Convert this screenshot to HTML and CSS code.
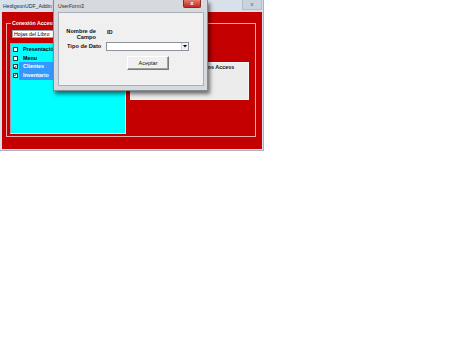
FILE: index.html
```html
<!DOCTYPE html>
<html>
<head>
<meta charset="utf-8">
<link rel="stylesheet" href="styles.css">
</head>
<body>
<div class="desktop">
  <div class="win win-main">
    <div class="titlebar">
      <span class="title">HedigsonUDF_Addin</span>
      <span class="main-close">x</span>
    </div>
    <div class="main-body">
      <div class="frame">
        <span class="frame-caption">Conexión Access</span>
        <div class="left-col">
          <div class="textbox">Hojas del Libro</div>
          <div class="listbox">
            <div class="row"><span class="chk"></span><span class="item">Presentación</span></div>
            <div class="row"><span class="chk"></span><span class="item">Menu</span></div>
            <div class="row"><span class="chk"><svg viewBox="0 0 5 5" width="4" height="4"><polyline points="0.8,2.4 2,3.8 4.2,1" fill="none" stroke="#000" stroke-width="1"/></svg></span><span class="item sel">Clientes</span></div>
            <div class="row"><span class="chk"><svg viewBox="0 0 5 5" width="4" height="4"><polyline points="0.8,2.4 2,3.8 4.2,1" fill="none" stroke="#000" stroke-width="1"/></svg></span><span class="item sel">Inventario</span></div>
          </div>
        </div>
        <div class="access-box">
          <span class="access-label">Datos Access</span>
        </div>
      </div>
    </div>
  </div>

  <div class="win win-form">
    <div class="form-titlebar">
      <span class="title">UserForm3</span>
      <span class="form-close">x</span>
    </div>
    <div class="client">
      <div class="frow frow1">
        <span class="lbl lbl-name">Nombre de<br>Campo</span>
        <span class="lbl lbl-id">ID</span>
      </div>
      <div class="frow frow2">
        <span class="lbl lbl-tipo">Tipo de Dato</span>
        <div class="combo"><span class="combo-btn"><svg viewBox="0 0 5 3" width="4" height="2.4"><polygon points="0,0 5,0 2.5,3" fill="#000"/></svg></span></div>
      </div>
      <div class="frow frow3">
        <button class="btn">Aceptar</button>
      </div>
    </div>
  </div>
</div>
</body>
</html>
```

FILE: styles.css
```css
* { box-sizing: border-box; }
html, body { margin: 0; padding: 0; background: #ffffff; }
body { font-family: "Liberation Sans", Arial, sans-serif; }

.desktop {
  position: relative;
  width: 474px;
  height: 355px;
  overflow: hidden;
  background: #ffffff;
}

.win { position: absolute; }

/* Main window */
.win-main {
  left: 0;
  top: 0;
  width: 264px;
  height: 151px;
  background: #d8e0ea;
  border-right: 1px solid #a9b3bf;
  border-bottom: 1px solid #a9b3bf;
  display: flex;
  flex-direction: column;
  padding: 0 1px 1px 2px;
}
.titlebar {
  height: 12px;
  display: flex;
  align-items: center;
  justify-content: space-between;
  padding-left: 1px;
}
.title {
  font-size: 5.2px;
  color: #1e2a36;
  white-space: nowrap;
}
.main-close {
  width: 20px;
  height: 10px;
  margin-top: -2px;
  background: #cbd4de;
  border: 1px solid #b4bec9;
  border-top: none;
  color: #4a5560;
  font-size: 6px;
  line-height: 8px;
  text-align: center;
}
.main-body {
  flex: 1;
  background: #c40000;
  padding: 11px 6px 12px 4px;
  display: flex;
}
.frame {
  position: relative;
  flex: 1;
  border: 1px solid #f3a9a9;
  display: flex;
  align-items: flex-start;
  padding: 6px 5px 2px 3px;
}
.frame-caption {
  position: absolute;
  left: 4px;
  top: -4px;
  background: #c40000;
  color: #ffffff;
  font-weight: bold;
  font-size: 5.2px;
  line-height: 7px;
  padding: 0 1px;
  white-space: nowrap;
}
.left-col {
  display: flex;
  flex-direction: column;
  width: 116px;
}
.textbox {
  margin-left: 2px;
  width: 112px;
  height: 8px;
  background: #ffffff;
  border: 1px solid #9aa3ad;
  font-size: 5.3px;
  line-height: 6px;
  padding-left: 1px;
  color: #000;
  white-space: nowrap;
}
.listbox {
  margin-top: 5px;
  height: 91px;
  background: #00ffff;
  border: 1px solid #f0e6e6;
  border-top-color: #9aa3ad;
  border-left-color: #9aa3ad;
  padding-top: 1px;
}
.row {
  height: 8.7px;
  display: flex;
  align-items: center;
}
.chk {
  width: 5px;
  height: 5px;
  margin-left: 1.5px;
  background: #ffffff;
  border: 0.6px solid #333;
  display: flex;
  align-items: center;
  justify-content: center;
  flex: none;
  overflow: visible;
}
.chk svg { display: block; flex: none; }
.item {
  margin-left: 1.5px;
  flex: 1;
  height: 100%;
  padding-left: 4px;
  font-size: 5.4px;
  font-weight: bold;
  color: #000000;
  line-height: 8.7px;
  white-space: nowrap;
}
.item.sel {
  background: #3399ff;
  color: #ffffff;
}
.access-box {
  position: relative;
  margin-top: 32px;
  margin-left: 4px;
  width: 119px;
  height: 38px;
  background: #ececec;
  border: 1px solid #f8f8f8;
}
.access-label {
  position: absolute;
  left: 68px;
  top: 1px;
  font-size: 5.4px;
  font-weight: bold;
  color: #111;
  white-space: nowrap;
}

/* UserForm */
.win-form {
  left: 53px;
  top: 0;
  width: 155px;
  height: 91px;
  background: #d6d9dd;
  border: 1px solid #858b93;
  border-top: none;
  box-shadow: 2px 3px 4px rgba(0,0,0,0.55);
  display: flex;
  flex-direction: column;
  padding: 0 3px 4px 4px;
}
.form-titlebar {
  height: 12px;
  position: relative;
  display: flex;
  align-items: center;
}
.form-close {
  position: absolute;
  right: 3px;
  top: 0;
  width: 18px;
  height: 8px;
  background: linear-gradient(#e07a6e, #c42a18);
  border: 1px solid #8a2a20;
  border-top: none;
  border-radius: 0 0 2px 2px;
  color: #fff;
  font-size: 6px;
  font-weight: bold;
  line-height: 6px;
  text-align: center;
}
.client {
  flex: 1;
  background: #f0f0f0;
  border: 1px solid #aab0b7;
  display: flex;
  flex-direction: column;
}
.frow { display: flex; }
.frow1 {
  margin-top: 15px;
  padding-left: 6px;
  align-items: flex-start;
}
.lbl {
  font-size: 5.7px;
  font-weight: bold;
  color: #111;
  white-space: nowrap;
}
.lbl-name {
  width: 31px;
  text-align: right;
  line-height: 6px;
}
.lbl-id {
  margin-left: 11px;
  margin-top: 1px;
  line-height: 6px;
}
.frow2 {
  margin-top: 2px;
  padding-left: 8px;
  align-items: center;
}
.lbl-tipo {
  width: 35px;
  line-height: 9px;
}
.combo {
  margin-left: 4px;
  width: 83px;
  height: 9px;
  background: #ffffff;
  border: 1px solid #8c939b;
  display: flex;
  justify-content: flex-end;
}
.combo-btn {
  width: 7px;
  height: 7px;
  background: #f0f0f0;
  border-left: 1px solid #d0d0d0;
  display: flex;
  align-items: center;
  justify-content: center;
}
.combo-btn svg { display: block; }
.frow3 {
  margin-top: 5px;
  padding-left: 68px;
}
.btn {
  width: 42px;
  height: 14px;
  padding: 0;
  margin: 0;
  background: #f0f0f0;
  border: 1px solid #7a7a7a;
  border-top-color: #ffffff;
  border-left-color: #ffffff;
  box-shadow: inset -1px -1px 0 #a0a0a0;
  font-family: "Liberation Sans", Arial, sans-serif;
  font-size: 5.5px;
  color: #111;
}
```
